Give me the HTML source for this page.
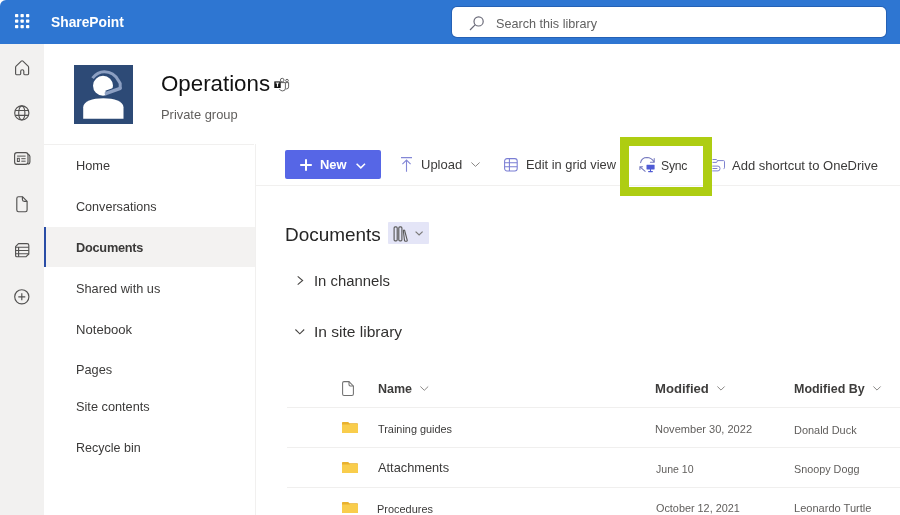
<!DOCTYPE html>
<html><head><meta charset="utf-8">
<style>
*{box-sizing:border-box;margin:0;padding:0}
html,body{width:900px;height:515px;overflow:hidden;background:#fff;font-family:"Liberation Sans",sans-serif;color:#323130}
.a{position:absolute}
.t{position:absolute;line-height:1;white-space:nowrap;will-change:transform}
svg{position:absolute;overflow:visible}
#top{left:0;top:0;width:900px;height:44px;background:#2E76D2;border-top-left-radius:6px}
#search{left:452px;top:7px;width:434px;height:30px;background:#fff;border-radius:5px;box-shadow:0 0 0 1px rgba(20,60,130,.35)}
#rail{left:0;top:44px;width:44px;height:471px;background:#F2F1F0}
#navline{left:44px;top:144px;width:210px;height:1px;background:#F1F0EF}
#vline{left:255px;top:144px;width:1px;height:371px;background:#F1F0EF}
.nav{font-size:12.75px;color:#3B3A39;left:75.5px}
#sel{left:44px;top:227px;width:211px;height:40px;background:#F3F2F1;border-left:2px solid #2A4DA6}
#cmdline{left:256px;top:185px;width:644px;height:1px;background:#F1F0EF}
#newbtn{left:285px;top:150px;width:95.5px;height:29px;background:#5666E6;border-radius:2px}
.cmd{font-size:12.85px;color:#3B3A39}
#hl{left:620px;top:137px;width:92px;height:59px;border:9px solid #AECD12}
#viewbtn{left:388px;top:222px;width:41px;height:22px;background:#E4E5F7;border-radius:1px}
.sec{color:#323130}
.hdr{font-weight:bold;color:#3E3D3C}
.rowline{position:absolute;left:287px;width:613px;height:1px;background:#F0EFEE}
.cell{color:#3B3A39}
.cellg{color:#605E5C}
</style></head><body>
<div id="top" class="a"></div>
<svg style="left:14.5px;top:14.4px" width="15" height="15" viewBox="0 0 15 15" fill="#fff"><rect x="0" y="0" width="3.3" height="3.3" rx=".7"/><rect x="5.5" y="0" width="3.3" height="3.3" rx=".7"/><rect x="11" y="0" width="3.3" height="3.3" rx=".7"/><rect x="0" y="5.5" width="3.3" height="3.3" rx=".7"/><rect x="5.5" y="5.5" width="3.3" height="3.3" rx=".7"/><rect x="11" y="5.5" width="3.3" height="3.3" rx=".7"/><rect x="0" y="11" width="3.3" height="3.3" rx=".7"/><rect x="5.5" y="11" width="3.3" height="3.3" rx=".7"/><rect x="11" y="11" width="3.3" height="3.3" rx=".7"/></svg>
<div class="t" style="left:51px;top:16px;font-size:13.8px;font-weight:bold;color:#fff">SharePoint</div>
<div id="search" class="a"></div>
<svg style="left:469px;top:16px" width="16" height="15" viewBox="0 0 16 15" fill="none" stroke="#6A6A78" stroke-width="1.2"><circle cx="9.6" cy="5.4" r="4.6"/><path d="M6.3 8.7L1 14"/></svg>
<div class="t" style="left:496px;top:17.5px;font-size:12.63px;color:#616161">Search this library</div>

<div id="rail" class="a"></div>
<!-- rail icons -->
<svg style="left:15px;top:60px" width="15" height="16" viewBox="0 0 15 16" fill="none" stroke="#535251" stroke-width="1.15" stroke-linejoin="round">
<path d="M0.6 7.4Q0.6 6.7 1.1 6.2L6.3 1.1Q7.1 0.4 7.9 1.1L13.1 6.2Q13.6 6.7 13.6 7.4V13.8Q13.6 14.7 12.7 14.7H9.7Q8.8 14.7 8.8 13.8V11.3A1.55 1.55 0 0 0 5.7 11.3V13.8Q5.7 14.7 4.8 14.7H1.5Q0.6 14.7 0.6 13.8Z"/></svg>
<svg style="left:14px;top:104.8px" width="16" height="16" viewBox="0 0 16 16" fill="none" stroke="#535251" stroke-width="1.15">
<circle cx="7.8" cy="7.9" r="7.1"/><ellipse cx="7.8" cy="7.9" rx="3.1" ry="7.1"/><path d="M1.3 5.5H14.3M1.3 10.3H14.3"/></svg>
<svg style="left:14px;top:152px" width="17" height="13" viewBox="0 0 17 13" fill="none" stroke="#535251" stroke-width="1.15">
<rect x="0.6" y="0.6" width="13.4" height="11.8" rx="2.3"/><path d="M14 2.4Q15.9 2.7 15.9 4.6V9.9Q15.9 11.8 14 12.1"/>
<path d="M3.1 4.1H11.6M7.3 6.7H11.6M7.3 9.2H11.6" stroke-width="1"/><rect x="3.4" y="6.3" width="1.9" height="3.2" stroke-width="1"/></svg>
<svg style="left:16px;top:196px" width="13" height="17" viewBox="0 0 13 17" fill="none" stroke="#535251" stroke-width="1.15" stroke-linejoin="round">
<path d="M2.5 0.7H6.4L11.1 5.4V14.1Q11.1 15.7 9.5 15.7H2.5Q0.8 15.7 0.8 14.1V2.4Q0.8 0.7 2.5 0.7Z"/><path d="M6.4 0.7V3.5Q6.4 5.4 8.3 5.4H11.1"/></svg>
<svg style="left:15px;top:243px" width="15" height="15" viewBox="0 0 15 15" fill="none" stroke="#535251" stroke-width="1.15" stroke-linejoin="round">
<path d="M0.6 3.7L3.5 0.6H12.1Q13.8 0.6 13.8 2.3V11L11.1 13.7H1.9Q0.6 13.7 0.6 12.4Z"/><path d="M0.6 4.2H13.8M0.6 7.5H13.8M0.6 10.7H13.8M3.6 4.2V13.7"/></svg>
<svg style="left:14px;top:289px" width="16" height="16" viewBox="0 0 16 16" fill="none" stroke="#535251" stroke-width="1.15">
<circle cx="7.8" cy="7.8" r="7.1"/><path d="M7.8 4.3V11.3M4.3 7.8H11.3"/></svg>

<!-- header -->
<svg style="left:74px;top:65px" width="59" height="59" viewBox="0 0 59 59">
<rect width="59" height="59" fill="#2D4A76"/>
<circle cx="29" cy="20.8" r="10" fill="#fff"/>
<path d="M18.5 13.2Q23.5 6.8 30.3 6.8Q39.8 6.9 44.4 15.6L46.2 18.6V23.4L32.3 28.4" fill="none" stroke="#2D4A76" stroke-width="5.6" stroke-linejoin="round"/>
<path d="M18.5 13.2Q23.5 6.8 30.3 6.8Q39.8 6.9 44.4 15.6L46.2 18.6V23.4" fill="none" stroke="#8C9FC2" stroke-width="3" stroke-linejoin="round"/>
<path d="M46.2 23.4L32.3 28.4" fill="none" stroke="#8C9FC2" stroke-width="3.4" stroke-linecap="round"/>
<path d="M9.2 53.8V42.2C9.2 36.6 18.4 33.3 29.35 33.3C40.3 33.3 49.5 36.6 49.5 42.2V53.8Z" fill="#fff"/>
</svg>
<div class="t" style="left:160.5px;top:73px;font-size:22.3px;color:#121212">Operations</div>
<svg style="left:273.5px;top:77.5px" width="15" height="14" viewBox="0 0 15 14" fill="none" stroke="#555" stroke-width=".9">
<circle cx="8.2" cy="2.1" r="1.8"/><circle cx="13" cy="2.6" r="1.3"/><path d="M6.5 4.6H11.4V10.3Q11.4 12.9 8.6 12.9Q6.3 12.9 5.4 11"/><path d="M11.6 4.6H14.6V8.9Q14.6 10.9 12.6 10.9H11.5"/>
<rect x="0.3" y="3.4" width="6.4" height="6.6" fill="#111" stroke="none"/><path d="M1.7 5H5.3M3.5 5V8.7" stroke="#fff" stroke-width="1.2"/></svg>
<div class="t" style="left:160.5px;top:109px;font-size:12.9px;color:#605E5C">Private group</div>

<div id="navline" class="a"></div>
<div id="vline" class="a"></div>
<div id="sel" class="a"></div>
<div class="t nav" style="top:159.9px">Home</div>
<div class="t nav" style="top:201.1px;font-size:12.6px">Conversations</div>
<div class="t nav" style="top:241.8px;font-weight:bold;letter-spacing:-.25px;color:#3A3938">Documents</div>
<div class="t nav" style="top:283px">Shared with us</div>
<div class="t nav" style="top:323.2px;font-size:13.1px">Notebook</div>
<div class="t nav" style="top:364px">Pages</div>
<div class="t nav" style="top:400.8px">Site contents</div>
<div class="t nav" style="top:442px;font-size:12.5px">Recycle bin</div>

<!-- command bar -->
<div id="cmdline" class="a"></div>
<div id="newbtn" class="a"></div>
<svg style="left:300px;top:158.6px" width="12" height="12" viewBox="0 0 12 12" stroke="#fff" stroke-width="2"><path d="M6 0.2V11.8M0.2 6H11.8"/></svg>
<div class="t" style="left:319.5px;top:158.6px;font-size:12.94px;font-weight:bold;color:#fff">New</div>
<svg style="left:355.5px;top:163px" width="10" height="6" viewBox="0 0 10 6" fill="none" stroke="#fff" stroke-width="1.5"><path d="M0.6 0.7L4.8 4.9L9 0.7"/></svg>

<svg style="left:400.5px;top:157px" width="11" height="15" viewBox="0 0 11 15" fill="none" stroke="#8387D6" stroke-width="1.1"><path d="M0 0.6H11M5.5 14.8V3M1.4 7.1L5.5 3L9.6 7.1"/></svg>
<div class="t cmd" style="left:420.6px;top:157.8px;font-size:13px">Upload</div>
<svg style="left:471.2px;top:162.4px" width="9" height="5" viewBox="0 0 9 5" fill="none" stroke="#8A8886" stroke-width="1"><path d="M0.4 0.5L4.5 4.4L8.6 0.5"/></svg>

<svg style="left:503.8px;top:158px" width="14" height="13.5" viewBox="0 0 14 13.5" fill="none" stroke="#7A7ED4" stroke-width="1.05"><rect x="0.6" y="0.6" width="12.6" height="12.3" rx="2.4"/><path d="M0.6 4.7H13.2M0.6 8.8H13.2M5.4 0.6V12.9"/></svg>
<div class="t cmd" style="left:525.6px;top:159px">Edit in grid view</div>

<svg style="left:638.5px;top:157px" width="16" height="15" viewBox="0 0 16 15" fill="none" stroke="#7478BE" stroke-width="1.05" stroke-linecap="round">
<path d="M1.6 5.6Q2.6 0.5 8 0.5Q12.4 0.6 14.9 4.6"/><path d="M15.2 1.6V5.3H11.4"/><path d="M6.2 14.3L1 9.8M0.9 12.4V9.7H3.6"/>
<rect x="7.5" y="7.7" width="8.1" height="4.8" rx=".4" fill="#4F5BD5" stroke="none"/><path d="M11.5 12.4V14.3M9.6 14.6H13.4" stroke="#4F5BD5" stroke-width="1.1"/></svg>
<div class="t cmd" style="left:661.2px;top:159.5px;font-size:12.2px;letter-spacing:-.25px">Sync</div>

<div id="hl" class="a"></div>

<svg style="left:712px;top:158px" width="13" height="14" viewBox="0 0 13 14" fill="none" stroke="#7E82CF" stroke-width="1">
<path d="M0.5 1.5H4.3L5.6 2.6H11.6Q12.5 2.6 12.5 3.6V9.8Q12.5 10.7 11.6 10.7M0.5 4.4H4.6L5.6 2.6"/><path d="M0.3 8.1H6Q8 8.1 8 10.5Q8 12.9 6 12.9H0.3M0.5 10.5H5.4"/></svg>
<div class="t cmd" style="left:732.2px;top:159px;font-size:13px">Add shortcut to OneDrive</div>

<!-- documents title -->
<div class="t" style="left:285.2px;top:225.5px;font-size:18.95px;color:#262626">Documents</div>
<div id="viewbtn" class="a"></div>
<svg style="left:393px;top:225.5px" width="16" height="16" viewBox="0 0 16 16" fill="none" stroke="#5A5A5A" stroke-width="1.15">
<rect x="1.1" y="0.9" width="3.1" height="14" rx="1.1"/><rect x="5.8" y="0.9" width="3.1" height="14" rx="1.1"/><path d="M11.6 4.3L14.2 14.2Q14.4 15 13.6 15.1L12.4 15.2Q11.7 15.2 11.5 14.5L10.4 5.2Q10.3 4 11 4Q11.4 4 11.6 4.3Z"/></svg>
<svg style="left:414.6px;top:231.3px" width="9" height="5" viewBox="0 0 9 5" fill="none" stroke="#7A7978" stroke-width="1.2"><path d="M0.6 0.6L4.1 4L7.6 0.6"/></svg>

<svg style="left:297px;top:276.3px" width="7" height="9" viewBox="0 0 7 9" fill="none" stroke="#484644" stroke-width="1.1"><path d="M0.7 0.4L5.6 4.5L0.7 8.6"/></svg>
<div class="t sec" style="left:314.2px;top:273.6px;font-size:14.85px">In channels</div>
<svg style="left:295.3px;top:329.4px" width="10" height="6" viewBox="0 0 10 6" fill="none" stroke="#484644" stroke-width="1.1"><path d="M0.4 0.5L4.8 4.8L9.2 0.5"/></svg>
<div class="t sec" style="left:314.2px;top:323.6px;font-size:15.55px">In site library</div>

<!-- table -->
<svg style="left:342px;top:380.7px" width="12" height="15" viewBox="0 0 12 15" fill="none" stroke="#707070" stroke-width="1.05" stroke-linejoin="round">
<path d="M2 0.6H7L11.4 5V12.9Q11.4 14.5 9.8 14.5H2Q0.6 14.5 0.6 12.9V2.1Q0.6 0.6 2 0.6Z"/><path d="M7 0.6V3.6Q7 5 8.3 5H11.4"/></svg>
<div class="t hdr" style="left:377.5px;top:382.5px;font-size:12.5px">Name</div>
<svg style="left:419.8px;top:386.1px" width="9" height="5" viewBox="0 0 9 5" fill="none" stroke="#8A8886" stroke-width="1"><path d="M0.4 0.5L4.3 4.3L8.2 0.5"/></svg>
<div class="t hdr" style="left:655px;top:381.6px;font-size:13.1px">Modified</div>
<svg style="left:716.6px;top:386.1px" width="9" height="5" viewBox="0 0 9 5" fill="none" stroke="#8A8886" stroke-width="1"><path d="M0.4 0.5L4 4.1L7.6 0.5"/></svg>
<div class="t hdr" style="left:794px;top:382.7px;font-size:12.48px">Modified By</div>
<svg style="left:873.2px;top:386.1px" width="9" height="5" viewBox="0 0 9 5" fill="none" stroke="#8A8886" stroke-width="1"><path d="M0.4 0.5L4 4.1L7.6 0.5"/></svg>

<div class="rowline" style="top:407px"></div>
<div class="rowline" style="top:447px"></div>
<div class="rowline" style="top:487px"></div>

<svg style="left:341.8px;top:422px" width="16" height="11" viewBox="0 0 16 11"><path d="M0 0.8Q0 0 0.8 0H6.2L7.4 1.3H15.2Q16 1.3 16 2.1V10.2Q16 11 15.2 11H0.8Q0 11 0 10.2Z" fill="#E9B12E"/><path d="M0 2.6H7.4L8.4 2H15.2Q16 2 16 2.8V10.2Q16 11 15.2 11H0.8Q0 11 0 10.2Z" fill="#F9CD4C"/></svg>
<svg style="left:341.8px;top:461.8px" width="16" height="11" viewBox="0 0 16 11"><path d="M0 0.8Q0 0 0.8 0H6.2L7.4 1.3H15.2Q16 1.3 16 2.1V10.2Q16 11 15.2 11H0.8Q0 11 0 10.2Z" fill="#E9B12E"/><path d="M0 2.6H7.4L8.4 2H15.2Q16 2 16 2.8V10.2Q16 11 15.2 11H0.8Q0 11 0 10.2Z" fill="#F9CD4C"/></svg>
<svg style="left:341.8px;top:502px" width="16" height="11" viewBox="0 0 16 11"><path d="M0 0.8Q0 0 0.8 0H6.2L7.4 1.3H15.2Q16 1.3 16 2.1V10.2Q16 11 15.2 11H0.8Q0 11 0 10.2Z" fill="#E9B12E"/><path d="M0 2.6H7.4L8.4 2H15.2Q16 2 16 2.8V10.2Q16 11 15.2 11H0.8Q0 11 0 10.2Z" fill="#F9CD4C"/></svg>

<div class="t cell" style="left:378.4px;top:423.6px;font-size:10.9px">Training guides</div>
<div class="t cell" style="left:377.6px;top:461.6px;font-size:12.79px">Attachments</div>
<div class="t cell" style="left:377.4px;top:503.6px;font-size:10.95px">Procedures</div>
<div class="t cellg" style="left:655.4px;top:424.4px;font-size:11.05px">November 30, 2022</div>
<div class="t cellg" style="left:655.6px;top:463.6px;font-size:10.55px">June 10</div>
<div class="t cellg" style="left:655.6px;top:502.6px;font-size:10.85px">October 12, 2021</div>
<div class="t cellg" style="left:794.4px;top:425px;font-size:10.95px">Donald Duck</div>
<div class="t cellg" style="left:794.4px;top:463.6px;font-size:10.8px">Snoopy Dogg</div>
<div class="t cellg" style="left:794.4px;top:502.6px;font-size:11.05px">Leonardo Turtle</div>
</body></html>
